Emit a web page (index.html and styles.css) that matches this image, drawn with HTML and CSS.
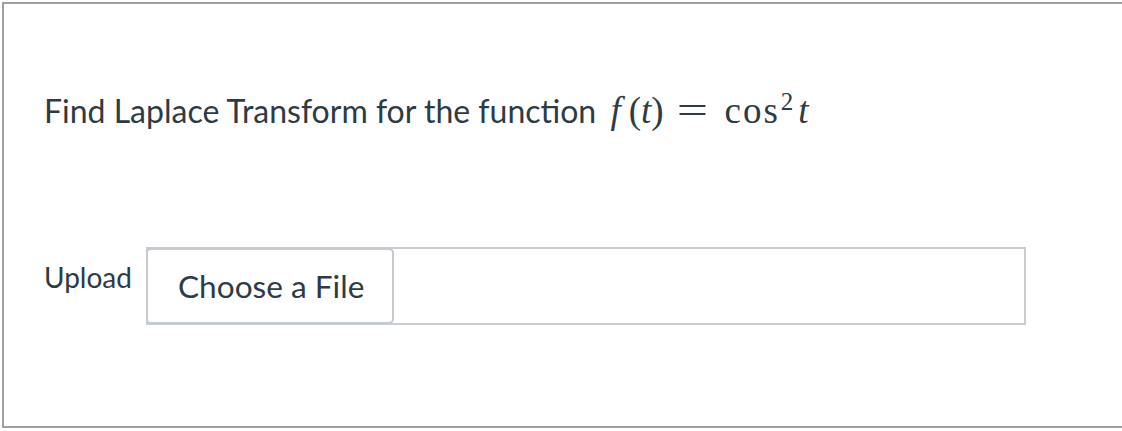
FILE: index.html
```html
<!DOCTYPE html>
<html>
<head>
<meta charset="utf-8">
<link rel="stylesheet" href="styles.css">
</head>
<body>
<div class="card">
  <p class="question">Find Laplace Transform for the function <span class="math"><i>f</i><span class="sp"></span>(<i>t</i>)<span class="eq">=</span><span class="cos">cos</span><sup>2</sup><span class="sp2"></span><i>t</i></span></p>
  <div class="upload">
    <span class="label">Upload</span>
    <div class="file">
      <button class="choose">Choose a File</button>
    </div>
  </div>
</div>
</body>
</html>
```
FILE: styles.css
```css
html, body { margin: 0; padding: 0; background: #fff; }
body { font-family: Lato, "Liberation Sans", sans-serif; color: #2d3b45; }
.card {
  margin: 2px;
  width: 1114px;
  height: 422px;
  border: 2px solid #a0a0a0;
  padding: 0 0 0 40px;
  box-sizing: content-box;
}
.question {
  margin: 87px 0 0 0;
  font-size: 32px;
  line-height: 40px;
}
.math { font-family: "Liberation Serif", "Times New Roman", serif; font-size: 37px; line-height: 1; margin-left: 6px; }
.math sup { font-size: 25px; line-height: 0; margin-left: 1px; }
.cos { letter-spacing: 2px; }
.sp { display: inline-block; width: 8px; }
.sp2 { display: inline-block; width: 5px; }
.eq { display: inline-block; transform: scaleX(1.5); margin: 0 22px 0 18px; }
.upload {
  display: flex;
  align-items: flex-start;
  margin-top: 116px;
}
.label { font-size: 28px; margin-top: 13px; width: 102px; }
.file {
  width: 876px;
  height: 74px;
  border: 2px solid #c7cdd1;
  position: relative;
}
.choose {
  position: absolute;
  left: -2px;
  top: -1px;
  width: 248px;
  height: 76px;
  border: 2px solid #c4cacf;
  border-radius: 5px;
  background: #fff;
  font-family: Lato, sans-serif;
  font-size: 31.6px;
  color: #2d3b45;
  text-align: left;
  padding: 0 0 0 30px;
}
```
